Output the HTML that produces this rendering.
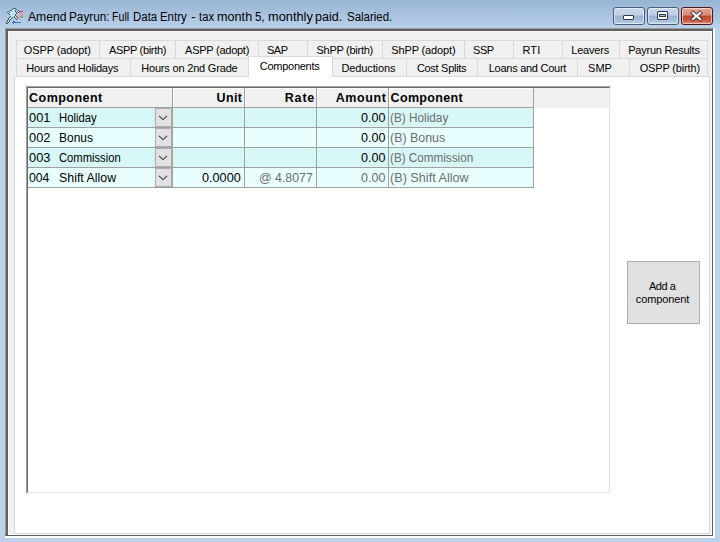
<!DOCTYPE html>
<html><head><meta charset="utf-8"><style>
*{margin:0;padding:0;box-sizing:border-box}
html,body{width:720px;height:542px;overflow:hidden;background:#bcd3ea;font-family:"Liberation Sans",sans-serif;position:relative}
.a{position:absolute}
.t{position:absolute;white-space:pre;color:#000;line-height:20px}
.tab{position:absolute;border:1px solid #d9d9d9;background:#f0f0f0}
.r1{top:40px;height:19px}
.r2{top:58px;height:19px}
.hl{position:absolute;background:#a0a0a0;width:1px}
.hw{position:absolute;background:#fff;width:1px}
.rl{position:absolute;background:#a0a0a0;height:1px}
.dd{position:absolute;left:155px;width:17px;height:19px;background:#e1e1e1;border:1px solid #adadad}
</style></head><body>
<div class="a" style="left:0;top:0;width:720px;height:28px;background:linear-gradient(#97b3d3,#b9d1ea)"></div>
<svg class="a" style="left:5px;top:6px" width="20" height="20" viewBox="0 0 20 20" shape-rendering="crispEdges"><rect x="8" y="2" width="1" height="1" fill="#4e565e"/><rect x="9" y="2" width="1" height="1" fill="#4e565e"/><rect x="10" y="2" width="1" height="1" fill="#4e565e"/><rect x="7" y="3" width="1" height="1" fill="#4e565e"/><rect x="8" y="3" width="1" height="1" fill="#b6e4f3"/><rect x="9" y="3" width="1" height="1" fill="#b6e4f3"/><rect x="10" y="3" width="1" height="1" fill="#b6e4f3"/><rect x="11" y="3" width="1" height="1" fill="#4e565e"/><rect x="5" y="4" width="1" height="1" fill="#4e565e"/><rect x="6" y="4" width="1" height="1" fill="#4e565e"/><rect x="7" y="4" width="1" height="1" fill="#b6e4f3"/><rect x="8" y="4" width="1" height="1" fill="#b6e4f3"/><rect x="9" y="4" width="1" height="1" fill="#b6e4f3"/><rect x="10" y="4" width="1" height="1" fill="#4e565e"/><rect x="11" y="4" width="1" height="1" fill="#b6e4f3"/><rect x="13" y="4" width="1" height="1" fill="#4e565e"/><rect x="3" y="5" width="1" height="1" fill="#4e565e"/><rect x="5" y="5" width="1" height="1" fill="#b6e4f3"/><rect x="6" y="5" width="1" height="1" fill="#b6e4f3"/><rect x="7" y="5" width="1" height="1" fill="#b6e4f3"/><rect x="8" y="5" width="1" height="1" fill="#b6e4f3"/><rect x="9" y="5" width="1" height="1" fill="#b6e4f3"/><rect x="10" y="5" width="1" height="1" fill="#4e565e"/><rect x="11" y="5" width="1" height="1" fill="#b6e4f3"/><rect x="12" y="5" width="1" height="1" fill="#4e565e"/><rect x="13" y="5" width="1" height="1" fill="#b6e4f3"/><rect x="14" y="5" width="1" height="1" fill="#b8388c"/><rect x="15" y="5" width="1" height="1" fill="#b8388c"/><rect x="16" y="5" width="1" height="1" fill="#b8388c"/><rect x="17" y="5" width="1" height="1" fill="#b8388c"/><rect x="2" y="6" width="1" height="1" fill="#4e565e"/><rect x="3" y="6" width="1" height="1" fill="#b6e4f3"/><rect x="4" y="6" width="1" height="1" fill="#4e565e"/><rect x="5" y="6" width="1" height="1" fill="#b6e4f3"/><rect x="6" y="6" width="1" height="1" fill="#b6e4f3"/><rect x="7" y="6" width="1" height="1" fill="#b6e4f3"/><rect x="8" y="6" width="1" height="1" fill="#b6e4f3"/><rect x="9" y="6" width="1" height="1" fill="#b6e4f3"/><rect x="10" y="6" width="1" height="1" fill="#b6e4f3"/><rect x="11" y="6" width="1" height="1" fill="#4e565e"/><rect x="12" y="6" width="1" height="1" fill="#b6e4f3"/><rect x="13" y="6" width="1" height="1" fill="#4e565e"/><rect x="15" y="6" width="1" height="1" fill="#f3909a"/><rect x="16" y="6" width="1" height="1" fill="#f3909a"/><rect x="3" y="7" width="1" height="1" fill="#4e565e"/><rect x="4" y="7" width="1" height="1" fill="#b6e4f3"/><rect x="5" y="7" width="1" height="1" fill="#b6e4f3"/><rect x="6" y="7" width="1" height="1" fill="#b6e4f3"/><rect x="7" y="7" width="1" height="1" fill="#b6e4f3"/><rect x="8" y="7" width="1" height="1" fill="#b6e4f3"/><rect x="9" y="7" width="1" height="1" fill="#b6e4f3"/><rect x="10" y="7" width="1" height="1" fill="#b6e4f3"/><rect x="11" y="7" width="1" height="1" fill="#4e565e"/><rect x="15" y="7" width="1" height="1" fill="#f3909a"/><rect x="16" y="7" width="1" height="1" fill="#f3909a"/><rect x="17" y="7" width="1" height="1" fill="#e0a878"/><rect x="4" y="8" width="1" height="1" fill="#4e565e"/><rect x="5" y="8" width="1" height="1" fill="#b6e4f3"/><rect x="6" y="8" width="1" height="1" fill="#b6e4f3"/><rect x="7" y="8" width="1" height="1" fill="#b6e4f3"/><rect x="8" y="8" width="1" height="1" fill="#b6e4f3"/><rect x="9" y="8" width="1" height="1" fill="#b6e4f3"/><rect x="10" y="8" width="1" height="1" fill="#4e565e"/><rect x="15" y="8" width="1" height="1" fill="#f3909a"/><rect x="16" y="8" width="1" height="1" fill="#f3909a"/><rect x="17" y="8" width="1" height="1" fill="#e0a878"/><rect x="5" y="9" width="1" height="1" fill="#b6e4f3"/><rect x="6" y="9" width="1" height="1" fill="#b6e4f3"/><rect x="7" y="9" width="1" height="1" fill="#b6e4f3"/><rect x="8" y="9" width="1" height="1" fill="#b6e4f3"/><rect x="9" y="9" width="1" height="1" fill="#b6e4f3"/><rect x="10" y="9" width="1" height="1" fill="#4e565e"/><rect x="14" y="9" width="1" height="1" fill="#f3909a"/><rect x="16" y="9" width="1" height="1" fill="#f3909a"/><rect x="17" y="9" width="1" height="1" fill="#e0a878"/><rect x="5" y="10" width="1" height="1" fill="#4e565e"/><rect x="6" y="10" width="1" height="1" fill="#b6e4f3"/><rect x="7" y="10" width="1" height="1" fill="#b6e4f3"/><rect x="8" y="10" width="1" height="1" fill="#b6e4f3"/><rect x="9" y="10" width="1" height="1" fill="#4e565e"/><rect x="10" y="10" width="1" height="1" fill="#b6e4f3"/><rect x="11" y="10" width="1" height="1" fill="#4e565e"/><rect x="14" y="10" width="1" height="1" fill="#f3909a"/><rect x="15" y="10" width="1" height="1" fill="#f3909a"/><rect x="16" y="10" width="1" height="1" fill="#5cb060"/><rect x="17" y="10" width="1" height="1" fill="#5cb060"/><rect x="4" y="11" width="1" height="1" fill="#4e565e"/><rect x="5" y="11" width="1" height="1" fill="#b6e4f3"/><rect x="6" y="11" width="1" height="1" fill="#b6e4f3"/><rect x="7" y="11" width="1" height="1" fill="#4e565e"/><rect x="9" y="11" width="1" height="1" fill="#4e565e"/><rect x="10" y="11" width="1" height="1" fill="#b6e4f3"/><rect x="11" y="11" width="1" height="1" fill="#b6e4f3"/><rect x="12" y="11" width="1" height="1" fill="#4e565e"/><rect x="14" y="11" width="1" height="1" fill="#f3909a"/><rect x="15" y="11" width="1" height="1" fill="#f3909a"/><rect x="16" y="11" width="1" height="1" fill="#5cb060"/><rect x="17" y="11" width="1" height="1" fill="#5cb060"/><rect x="3" y="12" width="1" height="1" fill="#4e565e"/><rect x="4" y="12" width="1" height="1" fill="#b6e4f3"/><rect x="5" y="12" width="1" height="1" fill="#b6e4f3"/><rect x="6" y="12" width="1" height="1" fill="#4e565e"/><rect x="10" y="12" width="1" height="1" fill="#4e565e"/><rect x="11" y="12" width="1" height="1" fill="#b6e4f3"/><rect x="12" y="12" width="1" height="1" fill="#4e565e"/><rect x="3" y="13" width="1" height="1" fill="#4e565e"/><rect x="4" y="13" width="1" height="1" fill="#b6e4f3"/><rect x="5" y="13" width="1" height="1" fill="#4e565e"/><rect x="11" y="13" width="1" height="1" fill="#4e565e"/><rect x="2" y="14" width="1" height="1" fill="#4e565e"/><rect x="3" y="14" width="1" height="1" fill="#b6e4f3"/><rect x="4" y="14" width="1" height="1" fill="#4e565e"/><rect x="2" y="15" width="1" height="1" fill="#4e565e"/><rect x="3" y="15" width="1" height="1" fill="#b6e4f3"/><rect x="4" y="15" width="1" height="1" fill="#4e565e"/><rect x="8" y="15" width="1" height="1" fill="#3a7ab4"/><rect x="9" y="15" width="1" height="1" fill="#3a7ab4"/><rect x="1" y="16" width="1" height="1" fill="#4e565e"/><rect x="2" y="16" width="1" height="1" fill="#b6e4f3"/><rect x="3" y="16" width="1" height="1" fill="#4e565e"/><rect x="7" y="16" width="1" height="1" fill="#3a7ab4"/><rect x="8" y="16" width="1" height="1" fill="#3a7ab4"/><rect x="9" y="16" width="1" height="1" fill="#3a7ab4"/><rect x="10" y="16" width="1" height="1" fill="#3a7ab4"/><rect x="11" y="16" width="1" height="1" fill="#3a7ab4"/><rect x="12" y="16" width="1" height="1" fill="#3a7ab4"/><rect x="13" y="16" width="1" height="1" fill="#3a7ab4"/><rect x="14" y="16" width="1" height="1" fill="#3a7ab4"/><rect x="15" y="16" width="1" height="1" fill="#3a7ab4"/><rect x="1" y="17" width="1" height="1" fill="#4e565e"/><rect x="2" y="17" width="1" height="1" fill="#4e565e"/><rect x="8" y="17" width="1" height="1" fill="#3a7ab4"/></svg>
<div class="a" style="left:613px;top:7px;width:32px;height:18px;border:1px solid #4f5d72;border-radius:3px;background:linear-gradient(#c6d8ec 0%,#bcd0e7 45%,#98b3d1 50%,#a3bcd8 75%,#bcd1e9 100%);box-shadow:inset 0 0 0 1px rgba(255,255,255,.55)"></div>
<div class="a" style="left:647px;top:7px;width:32px;height:18px;border:1px solid #4f5d72;border-radius:3px;background:linear-gradient(#c6d8ec 0%,#bcd0e7 45%,#98b3d1 50%,#a3bcd8 75%,#bcd1e9 100%);box-shadow:inset 0 0 0 1px rgba(255,255,255,.55)"></div>
<div class="a" style="left:681px;top:7px;width:32px;height:18px;border:1px solid #4b1616;border-radius:3px;background:linear-gradient(#e8a596 0%,#d88a78 45%,#c0432a 50%,#c9553c 75%,#dd8f7c 100%);box-shadow:inset 0 0 0 1px rgba(255,255,255,.55)"></div>
<div class="a" style="left:623px;top:15px;width:11px;height:5px;background:#fff;border:1px solid #333a46;border-radius:1px"></div>
<div class="a" style="left:657px;top:11px;width:11px;height:9px;background:#fff;border:1px solid #333a46;border-radius:1px"></div>
<div class="a" style="left:659px;top:14px;width:7px;height:3px;background:#a9c0dc;border:1px solid #333a46"></div>
<svg class="a" style="left:689px;top:10px" width="15" height="12" viewBox="0 0 15 12">
<path d="M4 3 L11 9 M11 3 L4 9" stroke="#3a3a3a" stroke-width="4" stroke-linecap="square"/>
<path d="M4 3 L11 9 M11 3 L4 9" stroke="#fff" stroke-width="2.2" stroke-linecap="square"/>
</svg>
<div class="a" style="left:5px;top:28px;width:710px;height:510px;background:#fff"></div>
<div class="a" style="left:5px;top:28px;width:708px;height:508px;background:#606060"></div>
<div class="a" style="left:5px;top:28px;width:707px;height:1px;background:#9a9a9a"></div>
<div class="a" style="left:5px;top:28px;width:1px;height:507px;background:#9a9a9a"></div>
<div class="a" style="left:8px;top:31px;width:704px;height:504px;background:#f0f0f0;border:1px solid #fafafa"></div>
<div class="a" style="left:14px;top:76px;width:696px;height:458px;background:#fff;border:1px solid #d9d9d9"></div>
<div class="tab r1" style="left:16px;width:84px"></div>
<div class="tab r1" style="left:99px;width:77px"></div>
<div class="tab r1" style="left:175px;width:84px"></div>
<div class="tab r1" style="left:258px;width:50px"></div>
<div class="tab r1" style="left:307px;width:76px"></div>
<div class="tab r1" style="left:382px;width:83px"></div>
<div class="tab r1" style="left:464px;width:50px"></div>
<div class="tab r1" style="left:513px;width:50px"></div>
<div class="tab r1" style="left:562px;width:58px"></div>
<div class="tab r1" style="left:619px;width:89px"></div>
<div class="tab r2" style="left:16px;width:115px"></div>
<div class="tab r2" style="left:130px;width:121px"></div>
<div class="tab r2" style="left:330px;width:77px"></div>
<div class="tab r2" style="left:406px;width:72px"></div>
<div class="tab r2" style="left:477px;width:101px"></div>
<div class="tab r2" style="left:577px;width:53px"></div>
<div class="tab r2" style="left:629px;width:79px"></div>
<div class="tab" style="left:248px;top:56px;width:85px;height:21px;background:#fff;border-bottom:none"></div>
<div class="a" style="left:249px;top:76px;width:83px;height:1px;background:#fff"></div>
<div class="a" style="left:26px;top:86px;width:585px;height:408px;background:#fff;border-left:1px solid #a0a0a0;border-top:1px solid #a0a0a0;border-right:1px solid #fff;border-bottom:1px solid #fff"></div>
<div class="a" style="left:27px;top:87px;width:583px;height:406px;border-left:1px solid #696969;border-top:1px solid #696969;border-right:1px solid #e3e3e3;border-bottom:1px solid #e3e3e3"></div>
<div class="a" style="left:28px;top:88px;width:581px;height:20px;background:#f0f0f0"></div>
<div class="a" style="left:28px;top:88px;width:144px;height:1px;background:#fff"></div>
<div class="a" style="left:28px;top:88px;width:1px;height:19px;background:#fff"></div>
<div class="a" style="left:173px;top:88px;width:71px;height:1px;background:#fff"></div>
<div class="a" style="left:173px;top:88px;width:1px;height:19px;background:#fff"></div>
<div class="a" style="left:245px;top:88px;width:71px;height:1px;background:#fff"></div>
<div class="a" style="left:245px;top:88px;width:1px;height:19px;background:#fff"></div>
<div class="a" style="left:317px;top:88px;width:71px;height:1px;background:#fff"></div>
<div class="a" style="left:317px;top:88px;width:1px;height:19px;background:#fff"></div>
<div class="a" style="left:389px;top:88px;width:144px;height:1px;background:#fff"></div>
<div class="a" style="left:389px;top:88px;width:1px;height:19px;background:#fff"></div>
<div class="a" style="left:28px;top:107px;width:506px;height:1px;background:#a0a0a0"></div>
<div class="a" style="left:28px;top:108px;width:505px;height:19px;background:#d7f7f7"></div>
<div class="rl" style="left:28px;top:127px;width:506px"></div>
<div class="dd" style="top:108px"></div>
<svg class="a" style="left:158px;top:115px" width="10" height="6" viewBox="0 0 10 6"><path d="M1 0.8 L5 4.6 L9 0.8" fill="none" stroke="#3c3c3c" stroke-width="1.1"/></svg>
<div class="a" style="left:28px;top:128px;width:505px;height:19px;background:#e9ffff"></div>
<div class="rl" style="left:28px;top:147px;width:506px"></div>
<div class="dd" style="top:128px"></div>
<svg class="a" style="left:158px;top:135px" width="10" height="6" viewBox="0 0 10 6"><path d="M1 0.8 L5 4.6 L9 0.8" fill="none" stroke="#3c3c3c" stroke-width="1.1"/></svg>
<div class="a" style="left:28px;top:148px;width:505px;height:19px;background:#d7f7f7"></div>
<div class="rl" style="left:28px;top:167px;width:506px"></div>
<div class="dd" style="top:148px"></div>
<svg class="a" style="left:158px;top:155px" width="10" height="6" viewBox="0 0 10 6"><path d="M1 0.8 L5 4.6 L9 0.8" fill="none" stroke="#3c3c3c" stroke-width="1.1"/></svg>
<div class="a" style="left:28px;top:168px;width:505px;height:19px;background:#e9ffff"></div>
<div class="rl" style="left:28px;top:187px;width:506px"></div>
<div class="dd" style="top:168px"></div>
<svg class="a" style="left:158px;top:175px" width="10" height="6" viewBox="0 0 10 6"><path d="M1 0.8 L5 4.6 L9 0.8" fill="none" stroke="#3c3c3c" stroke-width="1.1"/></svg>
<div class="hl" style="left:172px;top:88px;height:100px"></div>
<div class="hl" style="left:244px;top:88px;height:100px"></div>
<div class="hl" style="left:316px;top:88px;height:100px"></div>
<div class="hl" style="left:388px;top:88px;height:100px"></div>
<div class="hl" style="left:533px;top:88px;height:100px"></div>
<div class="a" style="left:627px;top:261px;width:73px;height:63px;background:#e1e1e1;border:1px solid #adadad"></div>
<div class="t" style="left:27.6px;top:7px;font-size:12px;transform:scaleX(1.0135);transform-origin:0 0;">Amend</div>
<div class="t" style="left:69.02px;top:7px;font-size:12px;transform:scaleX(0.9795);transform-origin:0 0;">Payrun:</div>
<div class="t" style="left:111.91px;top:7px;font-size:12px;transform:scaleX(0.8861);transform-origin:0 0;">Full</div>
<div class="t" style="left:133.35px;top:7px;font-size:12px;transform:scaleX(0.9542);transform-origin:0 0;">Data</div>
<div class="t" style="left:160.45px;top:7px;font-size:12px;transform:scaleX(0.9519);transform-origin:0 0;">Entry</div>
<div class="t" style="left:191.1px;top:7px;font-size:12px;transform:scaleX(1.15);transform-origin:0 0;">-</div>
<div class="t" style="left:199.0px;top:7px;font-size:12px;transform:scaleX(0.9375);transform-origin:0 0;">tax</div>
<div class="t" style="left:217.45px;top:7px;font-size:12px;transform:scaleX(1.0547);transform-origin:0 0;">month</div>
<div class="t" style="left:255.45px;top:7px;font-size:12px;transform:scaleX(0.95);transform-origin:0 0;">5,</div>
<div class="t" style="left:267.83px;top:7px;font-size:12px;transform:scaleX(1.0659);transform-origin:0 0;">monthly</div>
<div class="t" style="left:315.06px;top:7px;font-size:12px;transform:scaleX(1.0417);transform-origin:0 0;">paid.</div>
<div class="t" style="left:347.04px;top:7px;font-size:12px;transform:scaleX(0.9556);transform-origin:0 0;">Salaried.</div>
<div class="t" style="left:23.8px;top:40px;font-size:11px;letter-spacing:-0.109px;">OSPP (adopt)</div>
<div class="t" style="left:109.1px;top:40px;font-size:11px;letter-spacing:-0.336px;">ASPP (birth)</div>
<div class="t" style="left:185.1px;top:40px;font-size:11px;letter-spacing:-0.259px;">ASPP (adopt)</div>
<div class="t" style="left:267.0px;top:40px;font-size:11px;letter-spacing:-0.5px;">SAP</div>
<div class="t" style="left:316.5px;top:40px;font-size:11px;letter-spacing:-0.273px;">ShPP (birth)</div>
<div class="t" style="left:391.25px;top:40px;font-size:11px;letter-spacing:-0.136px;">ShPP (adopt)</div>
<div class="t" style="left:473.1px;top:40px;font-size:11px;letter-spacing:-0.5px;">SSP</div>
<div class="t" style="left:522.5px;top:40px;font-size:11px;letter-spacing:0.125px;">RTI</div>
<div class="t" style="left:571.25px;top:40px;font-size:11px;letter-spacing:-0.192px;">Leavers</div>
<div class="t" style="left:628.2px;top:40px;font-size:11px;letter-spacing:-0.223px;">Payrun Results</div>
<div class="t" style="left:26.3px;top:58px;font-size:11px;letter-spacing:-0.224px;">Hours and Holidays</div>
<div class="t" style="left:141.25px;top:58px;font-size:11px;letter-spacing:-0.191px;">Hours on 2nd Grade</div>
<div class="t" style="left:341.5px;top:58px;font-size:11px;letter-spacing:-0.122px;">Deductions</div>
<div class="t" style="left:416.9px;top:58px;font-size:11px;letter-spacing:-0.29px;">Cost Splits</div>
<div class="t" style="left:488.75px;top:58px;font-size:11px;letter-spacing:-0.268px;">Loans and Court</div>
<div class="t" style="left:588.1px;top:58px;font-size:11px;letter-spacing:-0.05px;">SMP</div>
<div class="t" style="left:639.7px;top:58px;font-size:11px;letter-spacing:-0.155px;">OSPP (birth)</div>
<div class="t" style="left:259.8px;top:56px;font-size:11px;letter-spacing:-0.267px;">Components</div>
<div class="t" style="left:29.1px;top:88px;font-size:12.5px;font-weight:bold;letter-spacing:0.462px;">Component</div>
<div class="t" style="left:216.5px;top:88px;font-size:12.5px;font-weight:bold;letter-spacing:0.4px;">Unit</div>
<div class="t" style="left:284.8px;top:88px;font-size:12.5px;font-weight:bold;letter-spacing:0.8px;">Rate</div>
<div class="t" style="left:335.7px;top:88px;font-size:12.5px;font-weight:bold;letter-spacing:0.58px;">Amount</div>
<div class="t" style="left:390.6px;top:88px;font-size:12.5px;font-weight:bold;letter-spacing:0.325px;">Component</div>
<div class="t" style="left:29.37px;top:108px;font-size:12.5px;transform:scaleX(1.0263);transform-origin:0 0;">001</div>
<div class="t" style="left:58.6px;top:108px;font-size:12.5px;transform:scaleX(0.9049);transform-origin:0 0;">Holiday</div>
<div class="t" style="left:360.8px;top:108px;font-size:12.5px;transform:scaleX(1.0043);transform-origin:0 0;">0.00</div>
<div class="t" style="left:29.37px;top:128px;font-size:12.5px;transform:scaleX(1.0263);transform-origin:0 0;">002</div>
<div class="t" style="left:58.54px;top:128px;font-size:12.5px;transform:scaleX(0.9588);transform-origin:0 0;">Bonus</div>
<div class="t" style="left:360.8px;top:128px;font-size:12.5px;transform:scaleX(1.0043);transform-origin:0 0;">0.00</div>
<div class="t" style="left:29.37px;top:148px;font-size:12.5px;transform:scaleX(1.0263);transform-origin:0 0;">003</div>
<div class="t" style="left:58.6px;top:148px;font-size:12.5px;transform:scaleX(0.897);transform-origin:0 0;">Commission</div>
<div class="t" style="left:360.8px;top:148px;font-size:12.5px;transform:scaleX(1.0043);transform-origin:0 0;">0.00</div>
<div class="t" style="left:29.42px;top:168px;font-size:12.5px;transform:scaleX(0.975);transform-origin:0 0;">004</div>
<div class="t" style="left:58.51px;top:168px;font-size:12.5px;transform:scaleX(0.9895);transform-origin:0 0;">Shift Allow</div>
<div class="t" style="left:360.8px;top:168px;font-size:12.5px;color:#6d6d6d;transform:scaleX(1.0043);transform-origin:0 0;">0.00</div>
<div class="t" style="left:390.46px;top:108px;font-size:12.5px;color:#6d6d6d;transform:scaleX(0.9426);transform-origin:0 0;">(B) Holiday</div>
<div class="t" style="left:390.41px;top:128px;font-size:12.5px;color:#6d6d6d;transform:scaleX(0.9926);transform-origin:0 0;">(B) Bonus</div>
<div class="t" style="left:390.46px;top:148px;font-size:12.5px;color:#6d6d6d;transform:scaleX(0.9356);transform-origin:0 0;">(B) Commission</div>
<div class="t" style="left:390.39px;top:168px;font-size:12.5px;color:#6d6d6d;transform:scaleX(1.0117);transform-origin:0 0;">(B) Shift Allow</div>
<div class="t" style="left:202.49px;top:168px;font-size:12.5px;transform:scaleX(1.0135);transform-origin:0 0;">0.0000</div>
<div class="t" style="left:259.21px;top:168px;font-size:12.5px;color:#6d6d6d;transform:scaleX(0.9906);transform-origin:0 0;">@ 4.8077</div>
<div class="t" style="left:649.0px;top:276px;font-size:11px;letter-spacing:-0.5px;">Add a</div>
<div class="t" style="left:635.8px;top:289px;font-size:11px;letter-spacing:-0.1px;">component</div>
</body></html>
